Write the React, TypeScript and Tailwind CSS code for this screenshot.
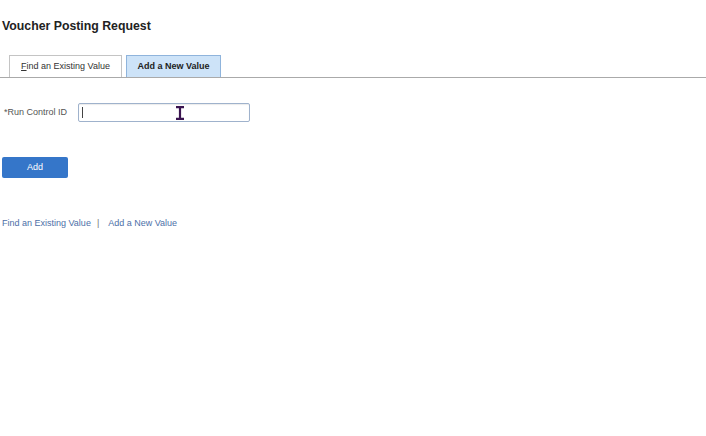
import React from "react";

const font = { fontFamily: '"Liberation Sans", Arial, sans-serif' };

export default function App() {
  return (
    <div className="w-[706px] h-[436px] bg-white text-[#333]" style={font}>
      {/* Title */}
      <h1 className="pl-[2px] pt-[18px] text-[12.3px] font-bold leading-[16px] text-[#222]">
        Voucher Posting Request
      </h1>

      {/* Tabs */}
      <div className="mt-[21px] flex items-end gap-[4px] border-b border-[#aaaaaa] pl-[9px]">
        <div className="flex h-[22px] w-[113px] items-center justify-center border border-b-0 border-[#c4c4c4] bg-white text-[9px] text-[#333]">
          <span>
            <span className="underline">F</span>ind an Existing Value
          </span>
        </div>
        <div className="flex h-[22px] w-[95px] items-center justify-center border border-b-0 border-[#8fb4dc] bg-[#cde3f8] text-[9px] font-bold text-[#222]">
          Add a New Value
        </div>
      </div>

      {/* Run Control ID */}
      <div className="mt-[25px] flex items-center pl-[4px]">
        <label className="w-[74px] text-[9px] text-[#555]">*Run Control ID</label>
        <div className="relative flex h-[19px] w-[172px] items-center rounded-[2px] border border-[#9fb2cc] bg-white pl-[2px] shadow-[inset_0_1px_1px_rgba(0,0,0,0.08)]">
          <span className="ml-[1px] h-[11px] w-px bg-[#444]" />
          {/* mouse I-beam cursor */}
          <svg
            className="absolute left-[96px] top-[2px]"
            width="10"
            height="14"
            viewBox="0 0 10 14"
          >
            <path d="M1 1.2h8M1 12.8h8M5 1v12" stroke="#3a1450" strokeWidth="2.2" fill="none" />
          </svg>
        </div>
      </div>

      {/* Add button */}
      <div className="mt-[35px] pl-[2px]">
        <button className="flex h-[21px] w-[66px] items-center justify-center rounded-[2px] bg-[#3576c9] text-[9px] text-white">
          Add
        </button>
      </div>

      {/* Bottom links */}
      <div className="mt-[39px] flex items-center pl-[2px] text-[9px] text-[#4d6fa8]">
        <span>Find an Existing Value</span>
        <span className="ml-[6px] text-[#777]">|</span>
        <span className="ml-[9px]">Add a New Value</span>
      </div>
    </div>
  );
}
